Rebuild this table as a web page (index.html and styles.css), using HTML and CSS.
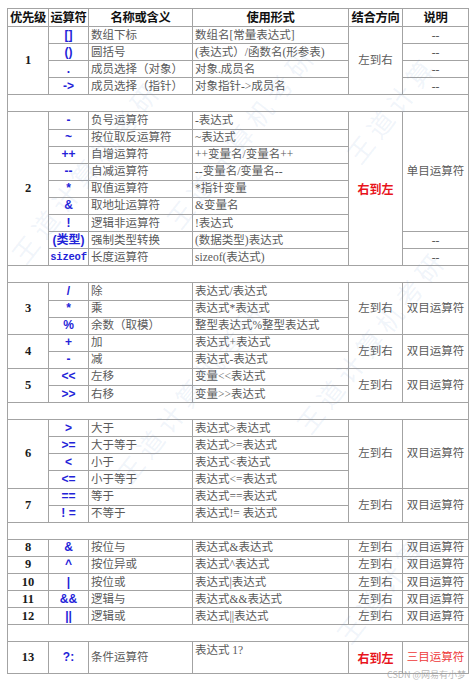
FILE: index.html
```html
<!DOCTYPE html>
<html lang="zh">
<head>
<meta charset="utf-8">
<title>运算符优先级</title>
<link rel="stylesheet" href="styles.css">
</head>
<body>
<div class="page">
<table class="ops">
<colgroup>
<col class="c1"><col class="c2"><col class="c3"><col class="c4"><col class="c5"><col class="c6">
</colgroup>
<thead>
<tr class="head">
<th>优先级</th><th>运算符</th><th>名称或含义</th><th>使用形式</th><th>结合方向</th><th>说明</th>
</tr>
</thead>
<tbody>
<tr><td class="lvl" rowspan="4">1</td><td class="op">[]</td><td class="txt">数组下标</td><td class="txt">数组名[常量表达式]</td><td class="dir" rowspan="4">左到右</td><td class="note">--</td></tr>
<tr><td class="op">()</td><td class="txt">圆括号</td><td class="txt">(表达式）/函数名(形参表)</td><td class="note">--</td></tr>
<tr><td class="op">.</td><td class="txt">成员选择（对象）</td><td class="txt">对象.成员名</td><td class="note">--</td></tr>
<tr><td class="op">-&gt;</td><td class="txt">成员选择（指针）</td><td class="txt">对象指针-&gt;成员名</td><td class="note">--</td></tr>
<tr><td class="gap" colspan="6"></td></tr>

<tr><td class="lvl" rowspan="9">2</td><td class="op">-</td><td class="txt">负号运算符</td><td class="txt">-表达式</td><td class="dir red" rowspan="9">右到左</td><td class="note" rowspan="7">单目运算符</td></tr>
<tr><td class="op">~</td><td class="txt">按位取反运算符</td><td class="txt">~表达式</td></tr>
<tr><td class="op">++</td><td class="txt">自增运算符</td><td class="txt">++变量名/变量名++</td></tr>
<tr><td class="op">--</td><td class="txt">自减运算符</td><td class="txt">--变量名/变量名--</td></tr>
<tr><td class="op">*</td><td class="txt">取值运算符</td><td class="txt">*指针变量</td></tr>
<tr><td class="op">&amp;</td><td class="txt">取地址运算符</td><td class="txt">&amp;变量名</td></tr>
<tr><td class="op">!</td><td class="txt">逻辑非运算符</td><td class="txt">!表达式</td></tr>
<tr><td class="op">(类型)</td><td class="txt">强制类型转换</td><td class="txt">(数据类型)表达式</td><td class="note">--</td></tr>
<tr><td class="op mono">sizeof</td><td class="txt">长度运算符</td><td class="txt">sizeof(表达式)</td><td class="note">--</td></tr>
<tr><td class="gap" colspan="6"></td></tr>

<tr><td class="lvl" rowspan="3">3</td><td class="op">/</td><td class="txt">除</td><td class="txt">表达式/表达式</td><td class="dir" rowspan="3">左到右</td><td class="note" rowspan="3">双目运算符</td></tr>
<tr><td class="op">*</td><td class="txt">乘</td><td class="txt">表达式*表达式</td></tr>
<tr><td class="op">%</td><td class="txt">余数（取模）</td><td class="txt">整型表达式%整型表达式</td></tr>
<tr><td class="lvl" rowspan="2">4</td><td class="op">+</td><td class="txt">加</td><td class="txt">表达式+表达式</td><td class="dir" rowspan="2">左到右</td><td class="note" rowspan="2">双目运算符</td></tr>
<tr><td class="op">-</td><td class="txt">减</td><td class="txt">表达式-表达式</td></tr>
<tr><td class="lvl" rowspan="2">5</td><td class="op">&lt;&lt;</td><td class="txt">左移</td><td class="txt">变量&lt;&lt;表达式</td><td class="dir" rowspan="2">左到右</td><td class="note" rowspan="2">双目运算符</td></tr>
<tr><td class="op">&gt;&gt;</td><td class="txt">右移</td><td class="txt">变量&gt;&gt;表达式</td></tr>
<tr><td class="gap" colspan="6"></td></tr>

<tr><td class="lvl" rowspan="4">6</td><td class="op">&gt;</td><td class="txt">大于</td><td class="txt">表达式&gt;表达式</td><td class="dir" rowspan="4">左到右</td><td class="note" rowspan="4">双目运算符</td></tr>
<tr><td class="op">&gt;=</td><td class="txt">大于等于</td><td class="txt">表达式&gt;=表达式</td></tr>
<tr><td class="op">&lt;</td><td class="txt">小于</td><td class="txt">表达式&lt;表达式</td></tr>
<tr><td class="op">&lt;=</td><td class="txt">小于等于</td><td class="txt">表达式&lt;=表达式</td></tr>
<tr><td class="lvl" rowspan="2">7</td><td class="op">==</td><td class="txt">等于</td><td class="txt">表达式==表达式</td><td class="dir" rowspan="2">左到右</td><td class="note" rowspan="2">双目运算符</td></tr>
<tr><td class="op">! =</td><td class="txt">不等于</td><td class="txt">表达式!= 表达式</td></tr>
<tr><td class="gap" colspan="6"></td></tr>

<tr><td class="lvl">8</td><td class="op">&amp;</td><td class="txt">按位与</td><td class="txt">表达式&amp;表达式</td><td class="dir">左到右</td><td class="note">双目运算符</td></tr>
<tr><td class="lvl">9</td><td class="op">^</td><td class="txt">按位异或</td><td class="txt">表达式^表达式</td><td class="dir">左到右</td><td class="note">双目运算符</td></tr>
<tr><td class="lvl">10</td><td class="op">|</td><td class="txt">按位或</td><td class="txt">表达式|表达式</td><td class="dir">左到右</td><td class="note">双目运算符</td></tr>
<tr><td class="lvl">11</td><td class="op">&amp;&amp;</td><td class="txt">逻辑与</td><td class="txt">表达式&amp;&amp;表达式</td><td class="dir">左到右</td><td class="note">双目运算符</td></tr>
<tr><td class="lvl">12</td><td class="op">||</td><td class="txt">逻辑或</td><td class="txt">表达式||表达式</td><td class="dir">左到右</td><td class="note">双目运算符</td></tr>
<tr><td class="gap" colspan="6"></td></tr>

<tr class="tall"><td class="lvl">13</td><td class="op">?:</td><td class="txt">条件运算符</td><td class="txt top">表达式 1?</td><td class="dir red">右到左</td><td class="note redtxt">三目运算符</td></tr>
</tbody>
</table>

<div class="wm wm1">王道计算机考研</div>
<div class="wm wm2">王道计算机考研</div>
<div class="wm wm3">王道计算机考研</div>
<div class="wm wm4">王道计算机考研</div>
<div class="wm wm5">王道计算</div>
<div class="wm wm6">王道计算</div>
<div class="credit">CSDN @网易有小梦</div>
</div>
</body>
</html>
```

FILE: styles.css
```css
html, body {
  margin: 0;
  padding: 0;
  background: #ffffff;
}

.page {
  position: relative;
  width: 474px;
  height: 680px;
  padding: 8px 0 0 7px;
  box-sizing: border-box;
  overflow: hidden;
}

.ops {
  width: 461px;
  table-layout: fixed;
  border-collapse: collapse;
  font-family: "Liberation Serif", "Noto Sans CJK SC", serif;
  color: #5a5a5a;
  font-size: 11.5px;
}

.c1 { width: 41px; }
.c2 { width: 40px; }
.c3 { width: 104px; }
.c4 { width: 156px; }
.c5 { width: 54px; }
.c6 { width: 66px; }

.ops th,
.ops td {
  border: 1px solid #a3a3a3;
  padding: 0 2px;
  line-height: 13px;
  vertical-align: middle;
  white-space: nowrap;
}

.ops tr { height: 17.1px; }
.ops tr.head { height: 18px; }
.ops tr.tall { height: 31.6px; }

.ops th {
  font-family: "Noto Sans CJK SC", sans-serif;
  font-weight: 700;
  font-size: 12.3px;
  color: #111111;
  text-align: center;
  padding: 0;
  letter-spacing: -0.3px;
}

.lvl {
  text-align: center;
  font-family: "Liberation Serif", serif;
  font-weight: 700;
  font-size: 12.5px;
  color: #1a1a1a;
}

.op {
  text-align: center;
  font-family: "Liberation Sans", "Noto Sans CJK SC", sans-serif;
  font-weight: 700;
  font-size: 12px;
  color: #2323d8;
}

.ops .op.mono {
  font-family: "Liberation Mono", monospace;
  font-size: 10.5px;
  padding: 0;
  letter-spacing: -0.2px;
}

.txt {
  text-align: left;
}

.ops .txt.top {
  vertical-align: top;
  padding-top: 2px;
}

.dir,
.note {
  text-align: center;
}

.note {
  font-size: 11.5px;
}

.ops .note[rowspan] {
  padding: 0 1px;
}

.red {
  color: #e8141c;
  font-family: "Noto Sans CJK SC", sans-serif;
  font-weight: 700;
  font-size: 12px;
}

.redtxt {
  color: #ee3a3a;
}

.ops .gap {
  padding: 0;
}

.wm {
  position: absolute;
  font-family: "Noto Sans CJK SC", sans-serif;
  font-size: 26px;
  line-height: 30px;
  color: rgba(110, 150, 210, 0.1);
  transform: rotate(-52deg);
  transform-origin: left top;
  white-space: nowrap;
  pointer-events: none;
  letter-spacing: 6px;
}

.wm1 { left: 5px; top: 250px; }
.wm2 { left: 160px; top: 215px; }
.wm3 { left: 110px; top: 470px; }
.wm4 { left: 290px; top: 420px; }
.wm5 { left: 340px; top: 150px; }
.wm6 { left: 330px; top: 630px; }

.credit {
  position: absolute;
  right: 8px;
  top: 669px;
  font-family: "Noto Sans CJK SC", sans-serif;
  font-size: 9px;
  line-height: 11px;
  color: rgba(150, 150, 150, 0.7);
  white-space: nowrap;
}
```
